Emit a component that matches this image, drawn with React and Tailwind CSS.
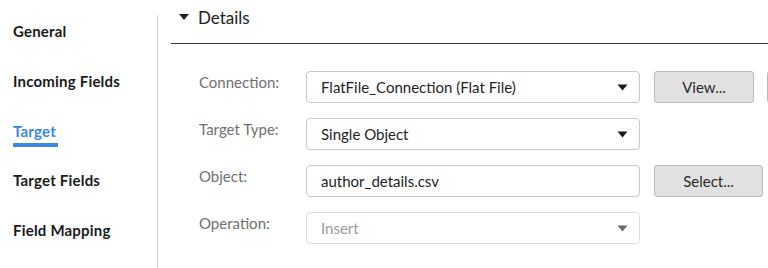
import React from "react";

const font = { fontFamily: "Lato, 'Open Sans', sans-serif" };

function Caret({ muted }) {
  return (
    <svg width="11" height="7" viewBox="0 0 11 7" className="shrink-0">
      <path d="M0.5 0.5h10L5.5 6.5z" fill={muted ? "#6b6b6b" : "#1a1a1a"} />
    </svg>
  );
}

function Field({ label, value, select, disabled, button, extra }) {
  return (
    <div className="flex items-start h-[32px]">
      <div className="w-[107px] pt-0 text-[15px] text-[#707070] shrink-0">{label}</div>
      <div
        className={`w-[334px] h-[32px] shrink-0 flex items-center justify-between pl-[14px] pr-[11px] rounded-[4px] border ${
          disabled ? "border-[#dedede] text-[#9a9a9a]" : "border-[#c8c8c8] text-[#1f1f1f]"
        } text-[15px] bg-white`}
      >
        <span>{value}</span>
        {select && <Caret muted={disabled} />}
      </div>
      {button && (
        <div className="flex shrink-0">
          <button
            className={`ml-[14px] h-[32px] ${button.w} rounded-[3px] bg-[#e1e1e1] border border-[#b9b9b9] text-[15px] text-[#2a2a2a]`}
          >
            {button.label}
          </button>
          {extra && (
            <div className="ml-[13px] h-[32px] w-[60px] rounded-[3px] bg-[#e1e1e1] border border-[#b9b9b9]" />
          )}
        </div>
      )}
    </div>
  );
}

export default function App() {
  const tabs = ["General", "Incoming Fields", "Target", "Target Fields", "Field Mapping"];

  return (
    <div className="w-[768px] h-[268px] bg-white flex overflow-hidden" style={font}>
      {/* Left nav */}
      <div className="w-[157px] shrink-0 flex flex-col pt-[19px] pl-[13px]">
        {tabs.map((t) => (
          <div key={t} className="h-[51px]">
            <span
              className={`inline-block text-[15px] font-bold leading-[22px] tracking-[0.2px] ${
                t === "Target" ? "text-[#3b86e6] border-b-[4px] border-[#3b86e6] pb-px pr-[2px]" : "text-[#1a1a1a]"
              }`}
            >
              {t}
            </span>
          </div>
        ))}
      </div>

      <div className="w-px bg-[#cfcfcf] mt-[15px] shrink-0" />

      {/* Main */}
      <div className="flex-1 pl-[13px] min-w-0">
        <div className="h-[44px] border-b border-[#3a3a3a] flex items-start pt-[5px] pl-[8px] gap-[9px]">
          <svg width="10" height="6" viewBox="0 0 10 6" className="mt-[9px]">
            <path d="M0 0h10L5 6z" fill="#222" />
          </svg>
          <span className="text-[17px] text-[#222]">Details</span>
        </div>

        <div className="pl-[28px] pt-[27px] flex flex-col gap-[15px] w-[700px]">
          <Field
            label="Connection:"
            value="FlatFile_Connection (Flat File)"
            select
            button={{ label: "View...", w: "w-[100px]" }}
            extra
          />
          <Field label="Target Type:" value="Single Object" select />
          <Field
            label="Object:"
            value="author_details.csv"
            button={{ label: "Select...", w: "w-[109px]" }}
          />
          <Field label="Operation:" value="Insert" select disabled />
        </div>
      </div>
    </div>
  );
}
